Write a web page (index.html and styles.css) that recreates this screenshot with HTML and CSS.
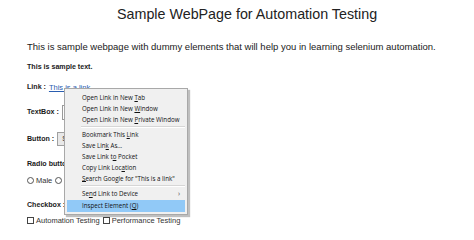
FILE: index.html
```html
<!DOCTYPE html>
<html>
<head>
<meta charset="utf-8">
<link rel="stylesheet" href="styles.css">
</head>
<body>
<div class="page">
  <h1 class="title">Sample WebPage for Automation Testing</h1>
  <p class="intro">This is sample webpage with dummy elements that will help you in learning selenium automation.</p>
  <div class="row r-sample"><b>This is sample text.</b></div>
  <div class="row r-link"><b>Link :</b><a class="link" href="#">This is a link</a></div>
  <div class="row r-text"><b>TextBox :</b><span class="textbox"></span></div>
  <div class="row r-button"><b>Button :</b><span class="btn">Submit</span></div>
  <div class="row r-radiolabel"><b>Radio buttons :</b></div>
  <div class="row r-radios"><span class="radio"></span><span class="opt">Male</span><span class="radio"></span><span class="opt">Female</span></div>
  <div class="row r-checklabel"><b>Checkbox :</b></div>
  <div class="row r-checks"><span class="check"></span><span class="opt">Automation Testing</span><span class="check"></span><span class="opt">Performance Testing</span></div>

  <div class="menu">
    <div class="item">Open Link in New <u>T</u>ab</div>
    <div class="item">Open Link in New <u>W</u>indow</div>
    <div class="item">Open Link in New <u>P</u>rivate Window</div>
    <div class="sep"></div>
    <div class="item">Bookmark This <u>L</u>ink</div>
    <div class="item">Save Lin<u>k</u> As...</div>
    <div class="item">Save Link t<u>o</u> Pocket</div>
    <div class="item">Copy Link Loc<u>a</u>tion</div>
    <div class="item key-first">Search Google for "This is a link"</div>
    <div class="sep"></div>
    <div class="item sub">Se<u>n</u>d Link to Device<span class="arrow">›</span></div>
    <div class="item active">Inspect Element (<u>Q</u>)</div>
  </div>
</div>
</body>
</html>
```

FILE: styles.css
```css
html, body {
  margin: 0;
  padding: 0;
  background: #ffffff;
}

.page {
  position: relative;
  width: 474px;
  height: 228px;
  overflow: hidden;
  font-family: "Comic Sans MS", "Liberation Sans", sans-serif;
  color: #1a1a1a;
}

.title {
  margin: 0;
  height: 28px;
  line-height: 28px;
  font-size: 14.3px;
  font-weight: normal;
  padding-left: 117px;
  color: #222;
  white-space: nowrap;
}

.intro {
  margin: 10px 0 0 0;
  padding-left: 27px;
  height: 18px;
  line-height: 18px;
  font-size: 9.5px;
  white-space: nowrap;
}

.row {
  display: flex;
  align-items: center;
  gap: 3px;
  padding-left: 27px;
  height: 14px;
  font-size: 7.1px;
  white-space: nowrap;
}

.row b {
  font-weight: bold;
}

.opt {
  font-size: 7.5px;
  color: #333;
  margin-right: 1px;
}

.r-sample { margin-top: 4px; }
.r-link { margin-top: 6px; }
.r-text { margin-top: 10px; height: 16px; }
.r-button { margin-top: 11px; height: 16px; }
.r-radiolabel { margin-top: 10px; }
.r-radios { margin-top: 2px; gap: 2px; }
.r-checklabel { margin-top: 11px; }
.r-checks { margin-top: 1px; gap: 2px; }

.link {
  color: #2a5db0;
  text-decoration: underline;
  font-size: 7.5px;
}

.textbox {
  display: inline-block;
  width: 80px;
  height: 13px;
  border: 1px solid #9a9a9a;
  background: #fff;
}

.btn {
  display: inline-block;
  height: 12px;
  line-height: 12px;
  padding: 0 4px;
  border: 1px solid #a0a0a0;
  background: #e8e8e8;
  font-size: 7px;
}

.radio {
  display: inline-block;
  width: 7px;
  height: 7px;
  border: 1px solid #555;
  border-radius: 50%;
  box-sizing: border-box;
}

.check {
  display: inline-block;
  width: 7px;
  height: 7px;
  border: 1px solid #444;
  box-sizing: border-box;
}

.menu {
  position: absolute;
  left: 64px;
  top: 88px;
  width: 124px;
  box-sizing: border-box;
  padding: 3px 2px 2px 2px;
  background: #f0f0f0;
  border: 1px solid #a8a8a8;
  box-shadow: 2px 2px 1px rgba(0, 0, 0, 0.25);
  font-family: "Open Sans", "Noto Sans", sans-serif;
  font-size: 6.2px;
  color: #111;
}

.item {
  position: relative;
  height: 11px;
  line-height: 11px;
  padding-left: 15px;
  white-space: nowrap;
}

.item u {
  text-decoration: underline;
}

.key-first::before {
  content: "";
  position: absolute;
  left: 15px;
  top: 8px;
  width: 3.5px;
  border-top: 0.6px solid #111;
}

.sep {
  height: 4px;
  margin-left: 14px;
  position: relative;
}

.sep::after {
  content: "";
  position: absolute;
  left: 0;
  right: 0;
  top: 1px;
  border-top: 1px solid #d6d6d6;
  border-bottom: 1px solid #ffffff;
}

.arrow {
  position: absolute;
  right: 5px;
  top: 0;
  font-size: 7px;
  color: #444;
}

.active {
  margin-top: 1px;
  height: 12px;
  line-height: 12px;
  background: #91c9f7;
}
```
